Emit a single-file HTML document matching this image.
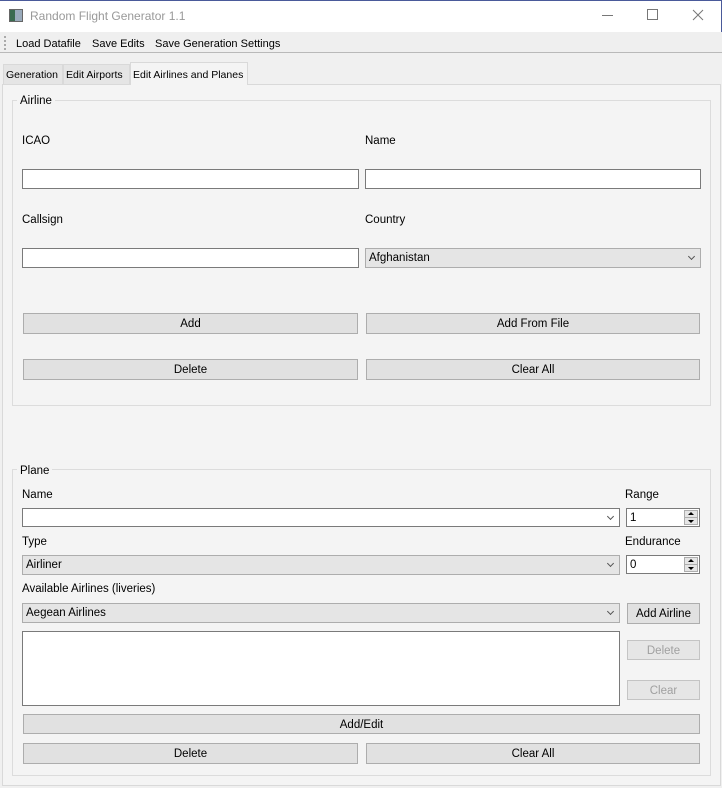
<!DOCTYPE html>
<html><head><meta charset="utf-8"><style>
*{box-sizing:border-box;margin:0;padding:0}
body{width:722px;height:788px;overflow:hidden;background:#f0f0f0;font-family:"Liberation Sans",sans-serif;font-size:11.5px;color:#000;position:relative}
.a{position:absolute}
.t{position:absolute;white-space:nowrap;line-height:14px}
.btn{position:absolute;background:#e1e1e1;border:1px solid #adadad;text-align:center;line-height:20px}
.dis{color:#a0a0a0;background:#e6e6e6;border-color:#c4c4c4}
.inp{position:absolute;background:#fff;border:1px solid #7a7a7a}
.cb{position:absolute;background:#e5e5e5;border:1px solid #adadad;padding-left:3px;line-height:19px}
.cbw{background:#fff;border-color:#7a7a7a}
.chev{position:absolute;right:6px;top:5px;width:5px;height:5px;border-right:1px solid #555;border-bottom:1px solid #555;transform:rotate(45deg)}
.grp{position:absolute;border:1px solid #dcdcdc}
.gl{position:absolute;background:#f4f4f4;padding:0 3px;line-height:14px}
.spin{position:absolute;background:#fff;border:1px solid #7a7a7a;padding-left:3px;line-height:18px}
.sb{position:absolute;right:1px;width:14px;height:8px;background:#e5e5e5;border:1px solid #adadad}
.up,.dn{position:absolute;left:3px;width:0;height:0;border-left:3px solid transparent;border-right:3px solid transparent}
.up{top:1px;border-bottom:3px solid #000}
.dn{top:2px;border-top:3px solid #000}
</style></head><body>
<div class="a" style="left:0;top:0;width:722px;height:32px;background:#fff;border-top:1px solid #4a5a9a;border-right:1px solid #4a5a9a"></div>
<div class="a" style="left:9px;top:9px;width:14px;height:13px;border:1px solid #666;background:linear-gradient(90deg,#3a6b50 0,#3a6b50 40%,#9ab 40%)"></div>
<div class="t" style="left:30px;top:9px;font-size:12px;color:#999">Random Flight Generator 1.1</div>
<div class="a" style="left:602px;top:15px;width:11px;height:1px;background:#777"></div>
<div class="a" style="left:647px;top:9px;width:11px;height:11px;border:1px solid #777"></div>
<svg class="a" style="left:692px;top:9px" width="12" height="12"><path d="M1 1L11 11M11 1L1 11" stroke="#777" stroke-width="1"/></svg>
<div class="a" style="left:0;top:32px;width:722px;height:21px;background:#efefef;border-bottom:1px solid #b9b9b9"></div>
<div class="a" style="left:4px;top:36px;width:2px;height:14px;border-left:2px dotted #aaa"></div>
<div class="t" style="left:16px;top:37px;font-size:11px">Load Datafile</div>
<div class="t" style="left:92px;top:37px;font-size:11px">Save Edits</div>
<div class="t" style="left:155px;top:37px;font-size:11px">Save Generation Settings</div>
<div class="a" style="left:2px;top:84px;width:719px;height:702px;background:#f4f4f4;border:1px solid #d9d9d9"></div>
<div class="a" style="left:3px;top:64px;width:60px;height:21px;background:#e5e5e5;border:1px solid #d9d9d9"></div>
<div class="t" style="left:6px;top:68px;font-size:10.5px">Generation</div>
<div class="a" style="left:63px;top:64px;width:67px;height:21px;background:#e5e5e5;border:1px solid #d9d9d9"></div>
<div class="t" style="left:66px;top:68px;font-size:10.5px">Edit Airports</div>
<div class="a" style="left:130px;top:62px;width:118px;height:23px;background:#f4f4f4;border:1px solid #d9d9d9;border-bottom:none"></div>
<div class="t" style="left:133px;top:68px;font-size:10.5px">Edit Airlines and Planes</div>

<div class="grp" style="left:12px;top:100px;width:699px;height:306px"></div>
<div class="gl" style="left:17px;top:94px">Airline</div>
<div class="t" style="left:22px;top:134px">ICAO</div>
<div class="t" style="left:365px;top:134px">Name</div>
<div class="inp" style="left:22px;top:169px;width:337px;height:20px"></div>
<div class="inp" style="left:365px;top:169px;width:336px;height:20px"></div>
<div class="t" style="left:22px;top:213px">Callsign</div>
<div class="t" style="left:365px;top:213px">Country</div>
<div class="inp" style="left:22px;top:248px;width:337px;height:20px"></div>
<div class="cb" style="left:365px;top:248px;width:336px;height:20px">Afghanistan<div class="chev"></div></div>
<div class="btn" style="left:23px;top:313px;width:335px;height:21px">Add</div>
<div class="btn" style="left:366px;top:313px;width:334px;height:21px">Add From File</div>
<div class="btn" style="left:23px;top:359px;width:335px;height:21px">Delete</div>
<div class="btn" style="left:366px;top:359px;width:334px;height:21px">Clear All</div>

<div class="grp" style="left:12px;top:469px;width:699px;height:307px"></div>
<div class="gl" style="left:17px;top:464px">Plane</div>
<div class="t" style="left:22px;top:488px">Name</div>
<div class="t" style="left:625px;top:488px">Range</div>
<div class="cb cbw" style="left:22px;top:508px;width:598px;height:19px"><div class="chev"></div></div>
<div class="spin" style="left:626px;top:508px;width:74px;height:19px">1<div class="sb" style="top:1px"><div class="up"></div></div><div class="sb" style="top:8px"><div class="dn"></div></div></div>
<div class="t" style="left:22px;top:535px">Type</div>
<div class="t" style="left:625px;top:535px">Endurance</div>
<div class="cb" style="left:22px;top:555px;width:598px;height:20px">Airliner<div class="chev"></div></div>
<div class="spin" style="left:626px;top:555px;width:74px;height:19px">0<div class="sb" style="top:1px"><div class="up"></div></div><div class="sb" style="top:8px"><div class="dn"></div></div></div>
<div class="t" style="left:22px;top:582px">Available Airlines (liveries)</div>
<div class="cb" style="left:22px;top:603px;width:598px;height:20px">Aegean Airlines<div class="chev"></div></div>
<div class="btn" style="left:627px;top:603px;width:73px;height:21px">Add Airline</div>
<div class="inp" style="left:22px;top:631px;width:598px;height:75px"></div>
<div class="btn dis" style="left:627px;top:640px;width:73px;height:20px">Delete</div>
<div class="btn dis" style="left:627px;top:680px;width:73px;height:20px">Clear</div>
<div class="btn" style="left:23px;top:714px;width:677px;height:20px">Add/Edit</div>
<div class="btn" style="left:23px;top:743px;width:335px;height:21px">Delete</div>
<div class="btn" style="left:366px;top:743px;width:334px;height:21px">Clear All</div>
</body></html>
